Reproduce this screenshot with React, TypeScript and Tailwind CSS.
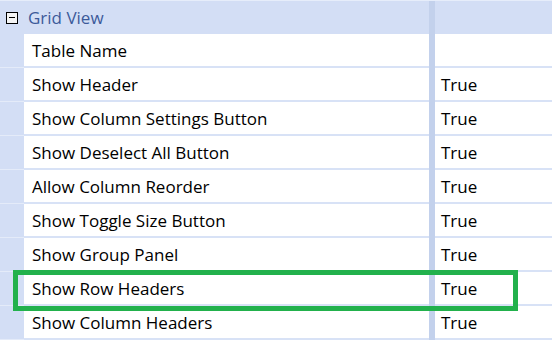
const rows: { name: string; value: string }[] = [
  { name: 'Table Name', value: '' },
  { name: 'Show Header', value: 'True' },
  { name: 'Show Column Settings Button', value: 'True' },
  { name: 'Show Deselect All Button', value: 'True' },
  { name: 'Allow Column Reorder', value: 'True' },
  { name: 'Show Toggle Size Button', value: 'True' },
  { name: 'Show Group Panel', value: 'True' },
  { name: 'Show Row Headers', value: 'True' },
  { name: 'Show Column Headers', value: 'True' },
];

export default function App() {
  return (
    <div
      className="relative w-[552px] h-[344px] overflow-hidden bg-white text-[17px] text-black"
      style={{ fontFamily: '"Open Sans", "Noto Sans", sans-serif' }}
    >
      {/* category header */}
      <div className="flex h-[34px] bg-[#d3def5] border-t border-[#e6edfa]">
        <div className="w-[24px] flex items-center justify-center">
          <span className="w-[12px] h-[12px] border-[1.5px] border-black bg-[#f4f4f4] flex items-center justify-center">
            <span className="w-[6px] h-[1.5px] bg-black" />
          </span>
        </div>
        <div className="w-[405px] flex items-center pl-[4px] pt-[1px] text-[#3c5a9a]">Grid View</div>
        <div className="w-[6px] bg-[#c3d1ec]" />
        <div className="flex-1" />
      </div>

      {rows.map((r) => (
        <div key={r.name} className="flex h-[34px]">
          <div className="w-[24px] bg-[#d3def5] border-b border-[#e4ebf9]" />
          <div className="w-[405px] flex items-center pl-[8px] pt-[2px] border-b-2 border-[#d8e2f6] whitespace-nowrap">
            {r.name}
          </div>
          <div className="w-[6px] bg-[#c3d1ec]" />
          <div className="flex-1 flex items-center pl-[6px] pt-[2px] border-b-2 border-[#d8e2f6]">{r.value}</div>
        </div>
      ))}

      {/* highlight annotation */}
      <div className="absolute left-[13px] top-[270px] w-[505px] h-[41px] border-[5px] border-[#22b14c]" />
    </div>
  );
}
